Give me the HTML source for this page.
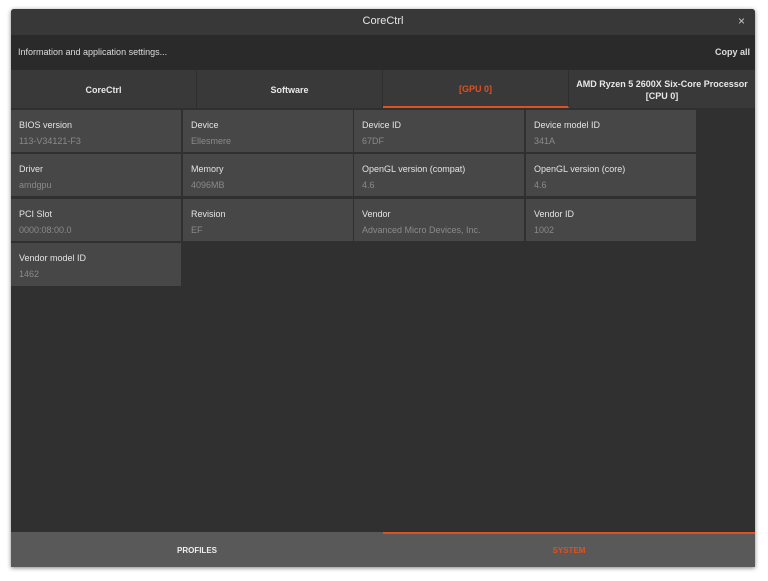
<!DOCTYPE html>
<html><head><style>
body{margin:0;width:768px;height:581px;background:#fff;position:relative;font-family:"Liberation Sans",sans-serif;overflow:hidden}
.win{position:absolute;left:11px;top:9px;width:744px;height:558px;background:#303030;box-shadow:0 1px 4px rgba(0,0,0,.5);border-radius:3px 3px 0 0;overflow:hidden}
.title{position:absolute;left:0;top:0;width:744px;height:26px;background:#383838;color:#e6e6e6;font-size:11px;text-align:center;line-height:25px}
.x{position:absolute;right:10px;top:0;color:#ccc;font-size:12px}
.info{position:absolute;top:26px;left:0;width:744px;height:35px;background:#2a2a2a;color:#ddd;font-size:9px;line-height:35px}
.tabs{position:absolute;top:61px;left:0;width:744px;height:38px;background:#393939}
.tab{position:absolute;top:0;height:38px;padding-top:1px;display:flex;align-items:center;justify-content:center;text-align:center;color:#e8e8e8;font-size:9px;font-weight:bold;border-right:1px solid #2e2e2e;box-sizing:border-box}
.cell{position:absolute;background:#474747;width:170px;height:42px;box-sizing:border-box;padding:10px 8px}
.cell .l{color:#e4e4e4;font-size:9px}
.cell .v{color:#8a8a8a;font-size:9px;margin-top:6px}
.bot{position:absolute;left:0;top:523px;width:744px;height:35px;background:#595959}
.bot div{position:absolute;top:0;width:372px;height:35px;line-height:37px;text-align:center;font-size:8px;font-weight:bold}
</style></head><body>
<div class="win">
<div class="title">CoreCtrl<span class="x">×</span></div>
<div class="info"><span style="position:absolute;left:7px">Information and application settings...</span><span style="position:absolute;right:5px;font-weight:bold">Copy all</span></div>
<div class="tabs">
<div class="tab" style="left:0;width:186px">CoreCtrl</div>
<div class="tab" style="left:186px;width:186px">Software</div>
<div class="tab" style="left:372px;width:186px;color:#e0511f;border-bottom:2px solid #e0511f">[GPU 0]</div>
<div class="tab" style="left:558px;width:186px;border:0;line-height:12px">AMD Ryzen 5 2600X Six-Core Processor<br>[CPU 0]</div>
</div>
<div class="cell" style="left:0;top:101px"><div class="l">BIOS version</div><div class="v">113-V34121-F3</div></div>
<div class="cell" style="left:172px;top:101px"><div class="l">Device</div><div class="v">Ellesmere</div></div>
<div class="cell" style="left:343px;top:101px"><div class="l">Device ID</div><div class="v">67DF</div></div>
<div class="cell" style="left:515px;top:101px"><div class="l">Device model ID</div><div class="v">341A</div></div>
<div class="cell" style="left:0;top:145px"><div class="l">Driver</div><div class="v">amdgpu</div></div>
<div class="cell" style="left:172px;top:145px"><div class="l">Memory</div><div class="v">4096MB</div></div>
<div class="cell" style="left:343px;top:145px"><div class="l">OpenGL version (compat)</div><div class="v">4.6</div></div>
<div class="cell" style="left:515px;top:145px"><div class="l">OpenGL version (core)</div><div class="v">4.6</div></div>
<div class="cell" style="left:0;top:190px"><div class="l">PCI Slot</div><div class="v">0000:08:00.0</div></div>
<div class="cell" style="left:172px;top:190px"><div class="l">Revision</div><div class="v">EF</div></div>
<div class="cell" style="left:343px;top:190px"><div class="l">Vendor</div><div class="v">Advanced Micro Devices, Inc.</div></div>
<div class="cell" style="left:515px;top:190px"><div class="l">Vendor ID</div><div class="v">1002</div></div>
<div class="cell" style="left:0;top:234px;height:43px"><div class="l">Vendor model ID</div><div class="v">1462</div></div>
<div class="bot"><div style="left:0;color:#eee">PROFILES</div><div style="left:372px;color:#e0511f;border-top:2px solid #e0511f;box-sizing:border-box;line-height:33px">SYSTEM</div></div>
</div>
</body></html>
